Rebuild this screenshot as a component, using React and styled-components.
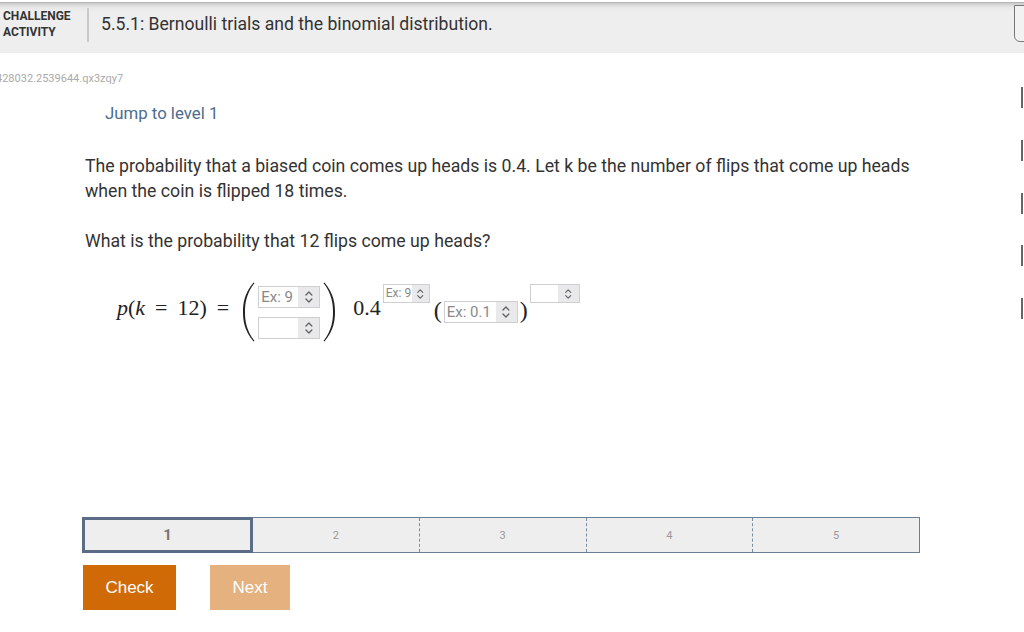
import React from 'react';
import styled, { createGlobalStyle } from 'styled-components';

const GlobalStyle = createGlobalStyle`
	html, body {
		margin: 0;
		padding: 0;
		background: #ffffff;
		font-family: Roboto, 'Liberation Sans', sans-serif;
		overflow: hidden;
	}
`;

const Page = styled.div`
	position: relative;
	width: 1024px;
	height: 632px;
	overflow: hidden;
	background: #fff;
`;

const Header = styled.header`
	display: flex;
	align-items: flex-start;
	height: 51px;
	margin-top: 2px;
	padding-left: 3px;
	background: linear-gradient(#c9c9c9 0px, #e6e6e6 4px, #eeeeee 8px);
	border-top: 1px solid #b5b5b5;
	box-sizing: border-box;
`;

const Label = styled.div`
	width: 72px;
	margin-top: 5px;
	font-size: 12px;
	font-weight: 700;
	line-height: 16px;
	color: #333;
`;

const Divider = styled.div`
	width: 2px;
	height: 34px;
	margin: 5px 12px 0 12px;
	background: #cacaca;
`;

const Title = styled.h1`
	margin: 11px 0 0 0;
	font-size: 17.6px;
	font-weight: 400;
	line-height: 20px;
	color: #333;
`;

const CornerBox = styled.div`
	position: absolute;
	top: 5px;
	left: 1014px;
	width: 40px;
	height: 37px;
	border: 1px solid #777;
	border-radius: 0 0 0 6px;
	box-sizing: border-box;
	background: #f2f2f2;
`;

const EdgeTick = styled.div`
	position: absolute;
	left: 1021px;
	width: 2px;
	height: 21px;
	background: #666;
`;

const IdLine = styled.div`
	margin: 19px 0 0 -4px;
	font-size: 11px;
	color: #aaa;
	line-height: 14px;
`;

const Content = styled.main`
	width: 838px;
	padding-left: 82px;
`;

const JumpLink = styled.div`
	margin: 17px 0 0 23px;
	font-size: 16.8px;
	color: #4d6c8e;
	line-height: 20px;
`;

const Paragraph = styled.p`
	margin: ${p => p.$top}px 0 0 3px;
	font-size: 17.7px;
	line-height: 25px;
	color: #333;
`;

const MathRow = styled.div`
	display: flex;
	align-items: center;
	height: 60px;
	margin: 28px 0 0 35px;
	font-family: 'Liberation Serif', 'DejaVu Serif', serif;
	font-size: 22px;
	color: #222;
`;

const MathText = styled.span`
	display: flex;
	align-items: baseline;
	white-space: pre;
	line-height: 24px;
	margin: ${p => p.$margin || '0'};
	position: relative;
	top: -4px;
	i {
		font-style: italic;
	}
`;

const Rel = styled.span`
	margin: 0 10px;
`;

const Binom = styled.div`
	display: flex;
	align-items: center;
	margin-left: 4px;
`;

const BinomStack = styled.div`
	display: flex;
	flex-direction: column;
	gap: 9px;
	margin: 0 2px;
`;

const Sup = styled.div`
	align-self: flex-start;
	margin: 2px ${p => p.$right || 0}px 0 ${p => p.$left || 0}px;
`;

const Paren = styled.span`
	font-size: 24px;
	color: #222;
	margin: 0 2px 0 ${p => p.$left || 2}px;
	line-height: 1;
	position: relative;
	top: -2px;
`;

const InputBox = styled.div`
	position: relative;
	display: flex;
	width: ${p => p.$w}px;
	height: ${p => p.$h}px;
	border: 1px solid #cfcfcf;
	box-sizing: border-box;
	background: #fff;
	overflow: hidden;
	font-family: Roboto, 'Liberation Sans', sans-serif;
`;

const Placeholder = styled.span`
	flex: 1;
	min-width: 0;
	white-space: nowrap;
	padding-left: 2px;
	font-size: ${p => p.$fs}px;
	line-height: ${p => p.$h - 2}px;
	color: #8a8a8a;
`;

const Spinner = styled.span`
	flex: 0 0 ${p => p.$sw}px;
	display: flex;
	align-items: center;
	justify-content: center;
	background: #e9e9eb;
`;

const Chevrons = ({ size }) => (
	<svg width={size * 0.7} height={size} viewBox="0 0 10 14" fill="none" stroke="#666" strokeWidth="1.4" strokeLinecap="round" strokeLinejoin="round">
		<path d="M2 5 L5 2 L8 5" />
		<path d="M2 9 L5 12 L8 9" />
	</svg>
);

const NumberInput = ({ w, h, fs, sw, text }) => (
	<InputBox $w={w} $h={h}>
		<Placeholder $fs={fs} $h={h}>{text}</Placeholder>
		<Spinner $sw={sw}>
			<Chevrons size={h > 20 ? 14 : 12} />
		</Spinner>
	</InputBox>
);

const BigParen = ({ flip }) => (
	<svg width="13" height="60" viewBox="0 0 13 60" style={{ transform: flip ? 'scaleX(-1)' : 'none' }}>
		<path d="M11.5 1 C3 12, 2 22, 2 30 C2 38, 3 48, 11.5 59 L10.5 59.5 C1 48, 0 38, 0 30 C0 22, 1 12, 10.5 0.5 Z" fill="#222" />
	</svg>
);

const LevelBar = styled.div`
	display: flex;
	width: 838px;
	height: 36px;
	margin-top: 175px;
	box-sizing: border-box;
	border: 1px solid #6b7f93;
	background: #eeeeee;
`;

const LevelCell = styled.div`
	display: flex;
	align-items: center;
	justify-content: center;
	flex: ${p => (p.$active ? '0 0 171px' : '1')};
	margin: ${p => (p.$active ? '-1px 0 -1px -1px' : '0')};
	box-sizing: border-box;
	border: ${p => (p.$active ? '3px solid #5b6d86' : 'none')};
	border-left: ${p => (p.$active ? '3px solid #5b6d86' : p.$dashed ? '1px dashed #7a8ca0' : 'none')};
	font-size: ${p => (p.$active ? '15px' : '11px')};
	font-weight: ${p => (p.$active ? 700 : 400)};
	color: ${p => (p.$active ? '#777' : '#999')};
`;

const Buttons = styled.div`
	display: flex;
	gap: 34px;
	margin: 12px 0 0 1px;
`;

const Button = styled.button`
	width: ${p => p.$w}px;
	height: 45px;
	border: none;
	padding: 0;
	background: ${p => p.$bg};
	color: #fff;
	font-family: 'Liberation Sans', Arial, sans-serif;
	font-size: 17px;
	cursor: pointer;
`;

export default function App() {
	return (
		<Page>
			<GlobalStyle />
			<Header>
				<Label>CHALLENGE<br />ACTIVITY</Label>
				<Divider />
				<Title>5.5.1: Bernoulli trials and the binomial distribution.</Title>
			</Header>
			<CornerBox />
			{[87, 140, 193, 245, 298].map(top => (
				<EdgeTick key={top} style={{ top }} />
			))}
			<IdLine>428032.2539644.qx3zqy7</IdLine>
			<Content>
				<JumpLink>Jump to level 1</JumpLink>
				<Paragraph $top={31}>
					The probability that a biased coin comes up heads is 0.4. Let k be the number of flips that come up heads when the coin is flipped 18 times.
				</Paragraph>
				<Paragraph $top={25}>What is the probability that 12 flips come up heads?</Paragraph>
				<MathRow>
					<MathText>
						<i>p</i>(<i>k</i><Rel>=</Rel>12)<Rel>=</Rel>
					</MathText>
					<Binom>
						<BigParen />
						<BinomStack>
							<NumberInput w={62} h={22} fs={15} sw={21} text="Ex: 9" />
							<NumberInput w={62} h={22} fs={15} sw={21} text="" />
						</BinomStack>
						<BigParen flip />
					</Binom>
					<MathText $margin="0 2px 0 18px">0.4</MathText>
					<Sup>
						<NumberInput w={47} h={19} fs={12} sw={17} text="Ex: 9" />
					</Sup>
					<Paren $left={4}>(</Paren>
					<NumberInput w={74} h={22} fs={15} sw={21} text="Ex: 0.1" />
					<Paren>)</Paren>
					<Sup>
						<NumberInput w={50} h={19} fs={12} sw={21} text="" />
					</Sup>
				</MathRow>
				<LevelBar>
					<LevelCell $active>1</LevelCell>
					<LevelCell>2</LevelCell>
					<LevelCell $dashed>3</LevelCell>
					<LevelCell $dashed>4</LevelCell>
					<LevelCell $dashed>5</LevelCell>
				</LevelBar>
				<Buttons>
					<Button $w={93} $bg="#cf6a06">Check</Button>
					<Button $w={80} $bg="#e4b17f">Next</Button>
				</Buttons>
			</Content>
		</Page>
	);
}
